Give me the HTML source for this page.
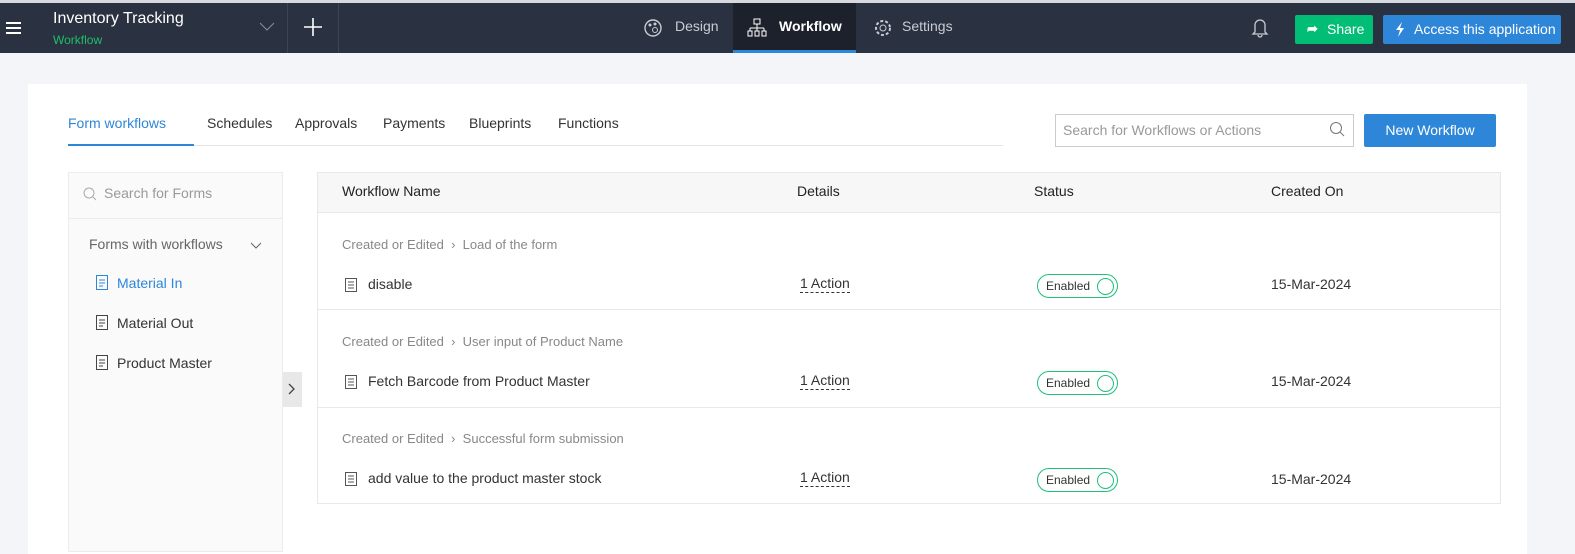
<!DOCTYPE html>
<html><head><meta charset="utf-8"><style>
*{box-sizing:border-box;margin:0;padding:0}
body{width:1575px;height:547px;overflow:hidden;background:#f4f5f9;font-family:"Liberation Sans",sans-serif;position:relative;color:#333}
.a{position:absolute;white-space:nowrap}
#top{position:absolute;left:0;top:0;width:1575px;height:3px;background:#d8d9de}
#bar{position:absolute;left:0;top:3px;width:1575px;height:50px;background:#2a3140}
.nav{color:#c9ccd3;font-size:14px}
#card{position:absolute;left:28px;top:84px;width:1499px;height:470px;background:#fff}
.tab{font-size:14px;color:#333;top:115px}
.row{position:absolute;left:317px;width:1184px;border:1px solid #e8e8e8;border-top:none}
.crumb{font-size:13px;color:#888}
.nm{font-size:14px;color:#333}
.act{font-size:14px;color:#333;border-bottom:1px dashed #333;padding-bottom:1px}
.en{width:81px;height:24px;border:1.5px solid #1fbf7a;border-radius:12px;font-size:12px;color:#333;padding:4px 0 0 8px}
.en::after{content:"";position:absolute;right:3px;top:3px;width:15px;height:15px;border:1.5px solid #1fbf7a;border-radius:50%}
.dt{font-size:14px;color:#333}
</style></head><body>
<div id="top"></div>
<div id="bar">
 <div class="a" style="left:6px;top:19px;width:15px;height:2px;background:#fff;box-shadow:0 5px 0 #fff,0 10px 0 #fff"></div>
 <div class="a" style="left:53px;top:7px;font-size:16px;color:#fff">Inventory Tracking</div>
 <div class="a" style="left:53px;top:30px;font-size:12px;color:#1fbf6a">Workflow</div>
 <svg class="a" style="left:259px;top:19px" width="16" height="10"><path d="M1 1l7 7 7-7" stroke="#8a8f9b" fill="none"/></svg>
 <div class="a" style="left:287px;top:0;width:1px;height:50px;background:#3c4454"></div>
 <div class="a" style="left:338px;top:0;width:1px;height:50px;background:#3c4454"></div>
 <svg class="a" style="left:304px;top:15px" width="18" height="18"><path d="M9 0v18M0 9h18" stroke="#fff" stroke-width="1.6"/></svg>
 <svg class="a" style="left:643px;top:15px" width="20" height="20"><circle cx="10" cy="10" r="8" stroke="#c9ccd3" fill="none" stroke-width="1.4"/><circle cx="7" cy="7" r="1.5" fill="#c9ccd3"/><circle cx="12" cy="6" r="1.5" fill="#c9ccd3"/><circle cx="12" cy="12" r="2.5" stroke="#c9ccd3" fill="none"/></svg>
 <div class="a nav" style="left:675px;top:15px">Design</div>
 <div class="a" style="left:733px;top:0;width:123px;height:50px;background:#1c212b;border-bottom:3px solid #2e86d9"></div>
 <svg class="a" style="left:747px;top:15px" width="20" height="20"><rect x="7" y="1" width="6" height="5" stroke="#fff" fill="none"/><path d="M10 6v4M3 10h14M3 10v3M10 10v3M17 10v3" stroke="#fff" fill="none"/><rect x="1" y="13" width="4" height="5" stroke="#fff" fill="none"/><rect x="8" y="13" width="4" height="5" stroke="#fff" fill="none"/><rect x="15" y="13" width="4" height="5" stroke="#fff" fill="none"/></svg>
 <div class="a" style="left:779px;top:15px;font-size:14px;color:#fff;font-weight:bold">Workflow</div>
 <svg class="a" style="left:873px;top:15px" width="20" height="20"><circle cx="10" cy="10" r="3" stroke="#c9ccd3" fill="none"/><circle cx="10" cy="10" r="7" stroke="#c9ccd3" fill="none" stroke-dasharray="3 2" stroke-width="2"/></svg>
 <div class="a nav" style="left:902px;top:15px">Settings</div>
 <svg class="a" style="left:1251px;top:13px" width="18" height="22"><path d="M4 16V9a5 5 0 0110 0v7l2 2H2zM7 19a2 2 0 004 0" stroke="#c9ccd3" fill="none" stroke-width="1.3"/></svg>
 <div class="a" style="left:1295px;top:12px;width:78px;height:29px;background:#02bd75;border-radius:2px;color:#fff;font-size:14px;padding:6px 0 0 32px">Share</div>
 <div class="a" style="left:1307px;top:18px;color:#fff;font-size:13px;font-weight:bold">➦</div>
 <div class="a" style="left:1383px;top:12px;width:178px;height:29px;background:#2e86d9;border-radius:2px;color:#fff;font-size:14px;padding:6px 0 0 31px">Access this application</div>
 <svg class="a" style="left:1395px;top:19px" width="10" height="15"><path d="M7 0L1 8h4l-2 7 6-9H5z" fill="#fff"/></svg>
</div>
<div id="card"></div>
<div class="a tab" style="left:68px;color:#2e86d9">Form workflows</div>
<div class="a tab" style="left:207px">Schedules</div>
<div class="a tab" style="left:295px">Approvals</div>
<div class="a tab" style="left:383px">Payments</div>
<div class="a tab" style="left:469px">Blueprints</div>
<div class="a tab" style="left:558px">Functions</div>
<div class="a" style="left:68px;top:145px;width:935px;height:1px;background:#e5e5e5"></div>
<div class="a" style="left:68px;top:144px;width:126px;height:2px;background:#2e86d9"></div>
<div class="a" style="left:1055px;top:114px;width:299px;height:33px;border:1px solid #ccc;font-size:14px;color:#999;padding:7px 0 0 7px">Search for Workflows or Actions</div>
<svg class="a" style="left:1329px;top:121px" width="16" height="16"><circle cx="7" cy="7" r="5.5" stroke="#777" fill="none"/><path d="M11 11l4 4" stroke="#777"/></svg>
<div class="a" style="left:1364px;top:114px;width:132px;height:33px;background:#2e86d9;border-radius:2px;color:#fff;font-size:14px;text-align:center;padding-top:8px">New Workflow</div>
<!-- sidebar -->
<div class="a" style="left:68px;top:172px;width:215px;height:380px;background:#fafafa;border:1px solid #ececec"></div>
<div class="a" style="left:68px;top:218px;width:215px;height:1px;background:#ececec"></div>
<svg class="a" style="left:83px;top:187px" width="14" height="14"><circle cx="6" cy="6" r="5" stroke="#aaa" fill="none"/><path d="M10 10l3 3" stroke="#aaa"/></svg>
<div class="a" style="left:104px;top:185px;font-size:14px;color:#999">Search for Forms</div>
<div class="a" style="left:89px;top:236px;font-size:14px;color:#666">Forms with workflows</div>
<svg class="a" style="left:250px;top:242px" width="12" height="8"><path d="M1 1l5 5 5-5" stroke="#666" fill="none"/></svg>
<svg class="a" style="left:96px;top:275px" width="12" height="15"><rect x=".5" y=".5" width="11" height="14" stroke="#2e86d9" fill="none"/><path d="M3 5h6M3 8h6M3 11h4" stroke="#2e86d9"/></svg>
<div class="a" style="left:117px;top:275px;font-size:14px;color:#2e86d9">Material In</div>
<svg class="a" style="left:96px;top:315px" width="12" height="15"><rect x=".5" y=".5" width="11" height="14" stroke="#444" fill="none"/><path d="M3 5h6M3 8h6M3 11h4" stroke="#444"/></svg>
<div class="a" style="left:117px;top:315px;font-size:14px;color:#333">Material Out</div>
<svg class="a" style="left:96px;top:355px" width="12" height="15"><rect x=".5" y=".5" width="11" height="14" stroke="#444" fill="none"/><path d="M3 5h6M3 8h6M3 11h4" stroke="#444"/></svg>
<div class="a" style="left:117px;top:355px;font-size:14px;color:#333">Product Master</div>
<div class="a" style="left:283px;top:372px;width:19px;height:35px;background:#e8e8e8"></div>
<svg class="a" style="left:288px;top:383px" width="8" height="12"><path d="M1 1l5 5-5 5" stroke="#444" fill="none" stroke-width="1.3"/></svg>
<!-- table -->
<div class="a" style="left:317px;top:172px;width:1184px;height:41px;background:#f7f7f7;border:1px solid #e8e8e8"></div>
<div class="a" style="left:342px;top:183px;font-size:14px;color:#222">Workflow Name</div>
<div class="a" style="left:797px;top:183px;font-size:14px;color:#222">Details</div>
<div class="a" style="left:1034px;top:183px;font-size:14px;color:#222">Status</div>
<div class="a" style="left:1271px;top:183px;font-size:14px;color:#222">Created On</div>
<div class="row" style="top:213px;height:97px"></div>
<div class="row" style="top:310px;height:98px"></div>
<div class="row" style="top:408px;height:96px"></div>

<div class="a crumb" style="left:342px;top:237px">Created or Edited &nbsp;›&nbsp; Load of the form</div>
<div class="a crumb" style="left:342px;top:334px">Created or Edited &nbsp;›&nbsp; User input of Product Name</div>
<div class="a crumb" style="left:342px;top:431px">Created or Edited &nbsp;›&nbsp; Successful form submission</div>

<svg class="a" style="left:345px;top:278px" width="12" height="14"><rect x=".5" y=".5" width="11" height="13" stroke="#555" fill="none"/><path d="M3 4h6M3 7h6M3 10h6" stroke="#555"/></svg>
<div class="a nm" style="left:368px;top:276px">disable</div>
<svg class="a" style="left:345px;top:375px" width="12" height="14"><rect x=".5" y=".5" width="11" height="13" stroke="#555" fill="none"/><path d="M3 4h6M3 7h6M3 10h6" stroke="#555"/></svg>
<div class="a nm" style="left:368px;top:373px">Fetch Barcode from Product Master</div>
<svg class="a" style="left:345px;top:472px" width="12" height="14"><rect x=".5" y=".5" width="11" height="13" stroke="#555" fill="none"/><path d="M3 4h6M3 7h6M3 10h6" stroke="#555"/></svg>
<div class="a nm" style="left:368px;top:470px">add value to the product master stock</div>

<div class="a act" style="left:800px;top:275px">1 Action</div>
<div class="a act" style="left:800px;top:372px">1 Action</div>
<div class="a act" style="left:800px;top:469px">1 Action</div>

<div class="a en" style="left:1037px;top:274px">Enabled</div>
<div class="a en" style="left:1037px;top:371px">Enabled</div>
<div class="a en" style="left:1037px;top:468px">Enabled</div>

<div class="a dt" style="left:1271px;top:276px">15-Mar-2024</div>
<div class="a dt" style="left:1271px;top:373px">15-Mar-2024</div>
<div class="a dt" style="left:1271px;top:471px">15-Mar-2024</div>
</body></html>
